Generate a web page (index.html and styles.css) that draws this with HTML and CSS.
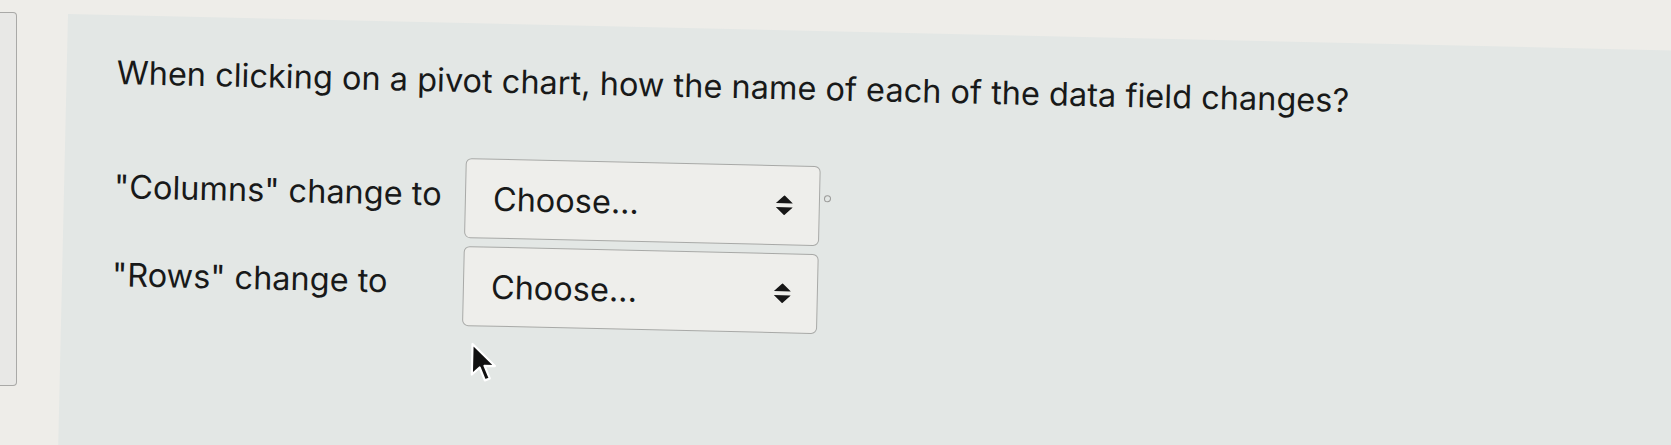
FILE: index.html
```html
<!DOCTYPE html>
<html lang="en">
<head>
    <meta charset="UTF-8">
    <meta name="viewport" content="width=device-width, initial-scale=1.0">
    <title>Pivot chart question</title>
    <link rel="stylesheet" href="styles.css">
</head>
<body>
    <div class="screen">
        <div class="sidebar"></div>
        <div class="question-panel">
            <h1 class="question-text">When clicking on a pivot chart, how the name of each of the data field changes?</h1>
            <div class="answer-grid">
                <label class="answer-label" for="columnsField">"Columns" change to</label>
                <div class="select-box first">
                    <select id="columnsField">
                        <option value="">Choose...</option>
                        <option value="legend">Legend (Series)</option>
                        <option value="axis">Axis (Categories)</option>
                    </select>
                    <svg class="select-arrows" viewBox="0 0 17 20" width="17" height="20"><path d="M8.5 0 L17 8 L0 8 Z M0 12 L17 12 L8.5 20 Z" fill="#161616"/></svg>
                </div>
                <label class="answer-label" for="rowsField">"Rows" change to</label>
                <div class="select-box">
                    <select id="rowsField">
                        <option value="">Choose...</option>
                        <option value="legend">Legend (Series)</option>
                        <option value="axis">Axis (Categories)</option>
                    </select>
                    <svg class="select-arrows" viewBox="0 0 17 20" width="17" height="20"><path d="M8.5 0 L17 8 L0 8 Z M0 12 L17 12 L8.5 20 Z" fill="#161616"/></svg>
                </div>
            </div>
            <svg class="mouse-cursor" viewBox="0 0 20 31" width="28" height="43"><path d="M2 2 L2 24 L7.5 18.8 L11.5 28 L15 26.5 L11 17.5 L18.5 17.5 Z" fill="#111" stroke="#fff" stroke-width="1.6" stroke-linejoin="round"/></svg>
        </div>
    </div>
</body>
</html>
```

FILE: styles.css
```css
body {
    font-family: 'Inter', 'Liberation Sans', sans-serif;
    margin: 0;
    background-color: #eeede9;
    color: #181919;
}
.screen {
    display: flex;
    align-items: flex-start;
    height: 445px;
    overflow: hidden;
}
.sidebar {
    flex: none;
    width: 16px;
    height: 372px;
    margin-top: 12px;
    background-color: #e8e8e6;
    border: 1.5px solid #a9a9a7;
    border-left: none;
    border-radius: 0 4px 4px 0;
}
.question-panel {
    position: relative;
    flex: none;
    width: 1640px;
    height: 432px;
    margin-top: 14px;
    margin-left: 51px;
    padding: 38px 0 0 50px;
    box-sizing: border-box;
    background-color: #e3e7e5;
    transform: rotate(1.3deg);
    transform-origin: 0 0;
}
.question-text {
    margin: 0 0 58px 0;
    font-size: 32.5px;
    font-weight: 400;
    line-height: 1.2;
}
.answer-grid {
    display: grid;
    grid-template-columns: 351px 355px;
    row-gap: 8px;
}
.answer-label {
    padding-top: 19px;
    font-size: 32.5px;
    line-height: 36px;
}
.select-box {
    position: relative;
    height: 80px;
}
.select-box select {
    width: 100%;
    height: 100%;
    padding: 0 60px 0 27px;
    font-family: inherit;
    font-size: 32.5px;
    color: #181919;
    background-color: #eeeeeb;
    border: 1.5px solid #a8a9a7;
    border-radius: 6px;
    appearance: none;
    -webkit-appearance: none;
    box-sizing: border-box;
}
.select-arrows {
    position: absolute;
    right: 27px;
    top: 30px;
    pointer-events: none;
}
.select-box.first::after {
    content: "";
    position: absolute;
    right: -11px;
    top: 29px;
    width: 5px;
    height: 5px;
    border: 1.2px solid #9a9a98;
    border-radius: 50%;
}
.mouse-cursor {
    position: absolute;
    left: 409px;
    top: 318px;
}
```
